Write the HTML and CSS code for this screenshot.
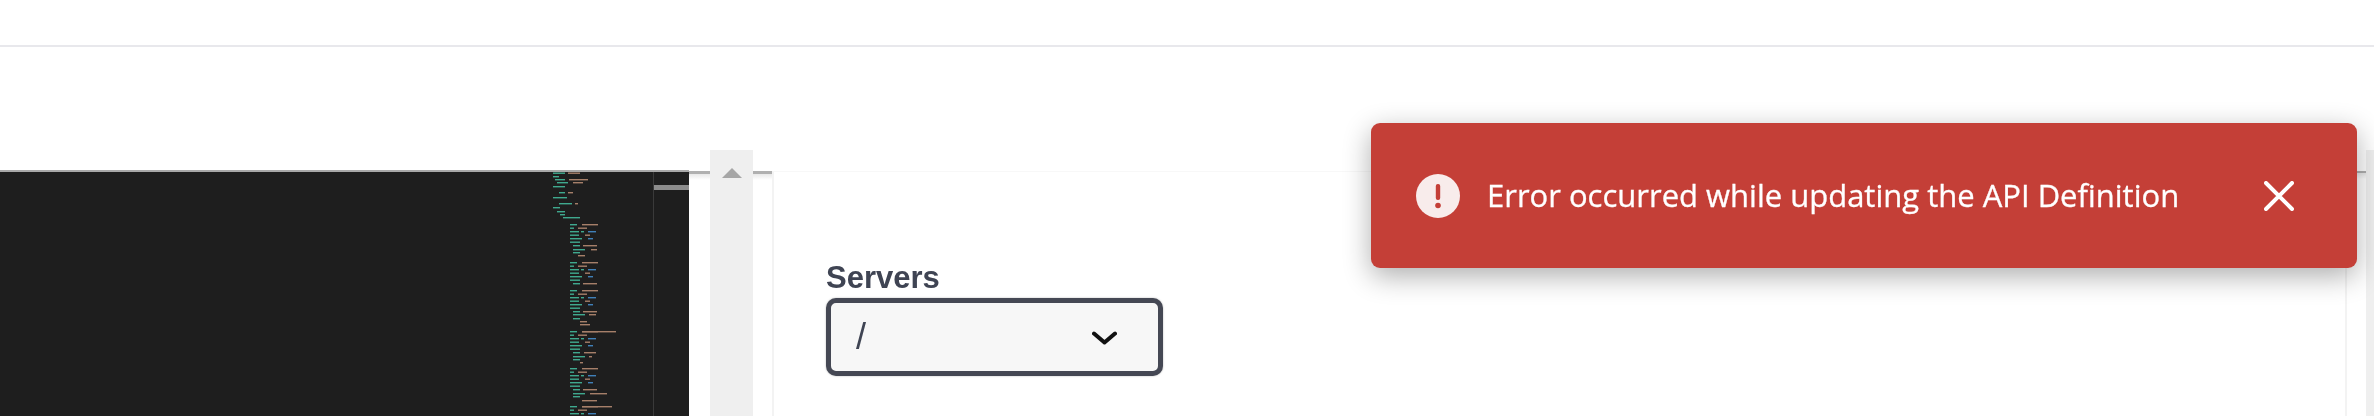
FILE: index.html
```html
<!DOCTYPE html>
<html lang="en">
<head>
<meta charset="utf-8">
<title>API Definition</title>
<link rel="stylesheet" href="styles.css">
</head>
<body>
<div class="page">
  <header class="topbar"></header>
  <main class="workspace">
    <section class="editor">
      <svg class="minimap" viewBox="540 172 113 244" aria-hidden="true">
        <defs>
          <g id="head">
            <rect class="t" x="570" y="0" width="7" height="1.4"/><rect class="o" x="582" y="0" width="16" height="1.4"/>
            <rect class="t" x="570" y="3.5" width="4" height="1.4"/><rect class="o" x="578" y="3.5" width="9" height="1.4"/>
            <rect class="t" x="570" y="7" width="9" height="1.4"/><rect class="t" x="581" y="7" width="3" height="1.4"/><rect class="b" x="588" y="7" width="8" height="1.4"/>
            <rect class="t" x="570" y="10.5" width="9" height="1.4"/><rect class="o" x="585" y="10.5" width="5" height="1.4"/>
            <rect class="t" x="570" y="14" width="12" height="1.4"/><rect class="b" x="588" y="14" width="5" height="1.4"/>
            <rect class="t" x="570" y="17.5" width="10" height="1.4"/>
          </g>
        </defs>
        <rect class="t" x="553" y="172.5" width="12" height="1.4"/><rect class="o" x="568" y="172.5" width="12" height="1.4"/>
        <rect class="t" x="553" y="176" width="6" height="1.4"/>
        <rect class="t" x="555" y="179" width="10" height="1.4"/><rect class="o" x="569" y="179" width="19" height="1.4"/>
        <rect class="t" x="557" y="182" width="11" height="1.4"/><rect class="o" x="573" y="182" width="10" height="1.4"/>
        <rect class="t" x="553" y="186" width="12" height="1.4"/>
        <rect class="t" x="559" y="192" width="6" height="1.4"/><rect class="o" x="568" y="192" width="5" height="1.4"/>
        <rect class="t" x="553" y="197" width="14" height="1.4"/>
        <rect class="t" x="559" y="203" width="13" height="1.4"/><rect class="o" x="575" y="203" width="3" height="1.4"/>
        <rect class="t" x="553" y="207" width="7" height="1.4"/>
        <rect class="t" x="557" y="211" width="8" height="1.4"/>
        <rect class="t" x="560" y="214" width="5" height="1.4"/>
        <rect class="t" x="563" y="217" width="17" height="1.4"/>

        <use href="#head" y="224"/>
        <rect class="t" x="573" y="245" width="7" height="1.4"/><rect class="o" x="583" y="245" width="14" height="1.4"/>
        <rect class="t" x="573" y="249" width="12" height="1.4"/><rect class="o" x="591" y="249" width="6" height="1.4"/>
        <rect class="t" x="573" y="252" width="7" height="1.4"/>
        <rect class="o" x="578" y="255" width="7" height="1.4"/>

        <use href="#head" y="262"/>
        <rect class="t" x="573" y="283" width="7" height="1.4"/><rect class="o" x="583" y="283" width="14" height="1.4"/>

        <use href="#head" y="290"/>
        <rect class="t" x="573" y="311" width="7" height="1.4"/><rect class="o" x="583" y="311" width="14" height="1.4"/>
        <rect class="t" x="573" y="314" width="12" height="1.4"/><rect class="o" x="589" y="314" width="7" height="1.4"/>
        <rect class="t" x="573" y="318" width="7" height="1.4"/>
        <rect class="o" x="580" y="321" width="7" height="1.4"/>
        <rect class="o" x="580" y="324" width="10" height="1.4"/>

        <use href="#head" y="331"/>
        <rect class="o" x="582" y="331" width="34" height="1.4"/>
        <rect class="t" x="573" y="352" width="7" height="1.4"/><rect class="o" x="584" y="352" width="12" height="1.4"/>
        <rect class="t" x="573" y="356" width="12" height="1.4"/><rect class="o" x="589" y="356" width="3" height="1.4"/>
        <rect class="t" x="573" y="359" width="7" height="1.4"/>
        <rect class="o" x="580" y="362" width="3" height="1.4"/>

        <use href="#head" y="368"/>
        <rect class="t" x="573" y="389" width="7" height="1.4"/><rect class="o" x="583" y="389" width="14" height="1.4"/>
        <rect class="t" x="573" y="393" width="12" height="1.4"/><rect class="o" x="590" y="393" width="17" height="1.4"/>
        <rect class="t" x="573" y="396" width="7" height="1.4"/>
        <rect class="o" x="582" y="400" width="15" height="1.4"/>

        <use href="#head" y="406"/>
        <rect class="o" x="582" y="406" width="30" height="1.4"/>
      </svg>
      <div class="ruler"><div class="ruler-thumb"></div></div>
    </section>

    <div class="gutter">
      <div class="gutter-edge gutter-left"></div>
      <div class="scroll-track"><svg class="scroll-arrow" viewBox="0 0 20 10" aria-hidden="true"><polygon points="10,0 20,10 0,10"/></svg></div>
      <div class="gutter-edge gutter-right"></div>
    </div>

    <section class="panel">
      <label class="field-label">Servers</label>
      <div class="select">
        <span class="select-value">/</span>
        <svg class="chevron" viewBox="0 0 25 14" aria-hidden="true"><path d="M2 2.5 L12.5 11.5 L23 2.5"/></svg>
      </div>
    </section>

    <div class="side-gap"></div>
    <div class="side-rail"></div>
  </main>

  <div class="toast" role="alert">
    <svg class="toast-icon" viewBox="0 0 44 44" aria-hidden="true">
      <circle cx="22" cy="22" r="22" fill="#f8eceb"/>
      <rect x="19.8" y="10" width="4.4" height="16" rx="2" fill="#c43f37"/>
      <circle cx="22" cy="31.5" r="2.8" fill="#c43f37"/>
    </svg>
    <span class="toast-text">Error occurred while updating the API Definition</span>
    <svg class="toast-close" viewBox="0 0 30 30" aria-hidden="true"><path d="M2 2 L28 28 M28 2 L2 28"/></svg>
  </div>
</div>
</body>
</html>
```

FILE: styles.css
```css
* { box-sizing: border-box; }
html, body { margin: 0; padding: 0; background: #fff; }
.page { position: relative; width: 2374px; height: 416px; overflow: hidden; background: #fff; }
.topbar { height: 47px; border-bottom: 2px solid #e8e8ec; background: #fff; }
.workspace { display: flex; height: 369px; align-items: stretch; }

.editor { width: 689px; margin-top: 123px; background: #1e1e1e; border-top: 2px solid #a8a8a8; display: flex; justify-content: flex-end; }
.minimap { width: 113px; height: 244px; flex: none; filter: blur(.5px); }
.minimap .t { fill: #3fa98e; }
.minimap .o { fill: #a67f69; }
.minimap .b { fill: #4080b8; }
.ruler { width: 36px; border-left: 1px solid #3a3a3a; padding-top: 13px; }
.ruler-thumb { height: 5px; background: #8c8c8c; }

.gutter { width: 83px; margin-top: 103px; display: flex; }
.gutter-edge { margin-top: 21px; height: 9px; border-top: 3px solid #b0b0b0; background: linear-gradient(#e8e8e8, #fff); }
.gutter-left { width: 21px; }
.gutter-right { width: 19px; }
.scroll-track { width: 43px; background: #efefef; display: flex; justify-content: center; align-items: flex-start; padding-top: 18px; }
.scroll-arrow { width: 20px; height: 10px; }
.scroll-arrow polygon { fill: #a6a6a6; }

.panel { flex: 1; margin-top: 124px; border-left: 2px solid #f3f3f3; border-right: 2px solid #f3f3f3; border-top: 1px solid #f8f8f8; padding: 89px 0 0 52px; }
.field-label { display: block; font: 700 31px/34px "Liberation Sans", Arial, sans-serif; color: #3f4453; filter: blur(.4px); }
.select { width: 337px; height: 78px; margin-top: 3px; border: 5px solid #454854; border-radius: 10px; background: #f7f7f7; display: flex; align-items: center; justify-content: space-between; padding: 0 41px 0 25px; box-shadow: 0 0 2px rgba(0,0,0,.3); }
.select-value { font: 400 36px/1 "Liberation Sans", Arial, sans-serif; color: #3f4453; filter: blur(.3px); }
.chevron { width: 25px; height: 14px; margin-top: 2px; }
.chevron path { fill: none; stroke: #111; stroke-width: 4; stroke-linecap: round; stroke-linejoin: round; }

.side-gap { width: 19px; margin-top: 124px; height: 8px; border-top: 2px solid #b0b0b0; background: linear-gradient(#e8e8e8, #fff); }
.side-rail { width: 8px; margin-top: 103px; background: #efefef; }

.toast { position: absolute; left: 1371px; top: 123px; width: 986px; height: 145px; background: #c43f37; border-radius: 9px; box-shadow: 0 8px 28px rgba(0,0,0,.32); display: flex; align-items: center; padding: 0 0 0 45px; }
.toast-icon { width: 44px; height: 44px; flex: none; }
.toast-text { margin-left: 27px; font: 400 31px/1 "Open Sans", sans-serif; color: #fff; -webkit-text-stroke: .3px #fff; white-space: nowrap; filter: blur(.4px); }
.toast-close { width: 30px; height: 30px; flex: none; margin-left: auto; margin-right: 63px; }
.toast-close path { fill: none; stroke: #fff; stroke-width: 4; stroke-linecap: round; }
```
